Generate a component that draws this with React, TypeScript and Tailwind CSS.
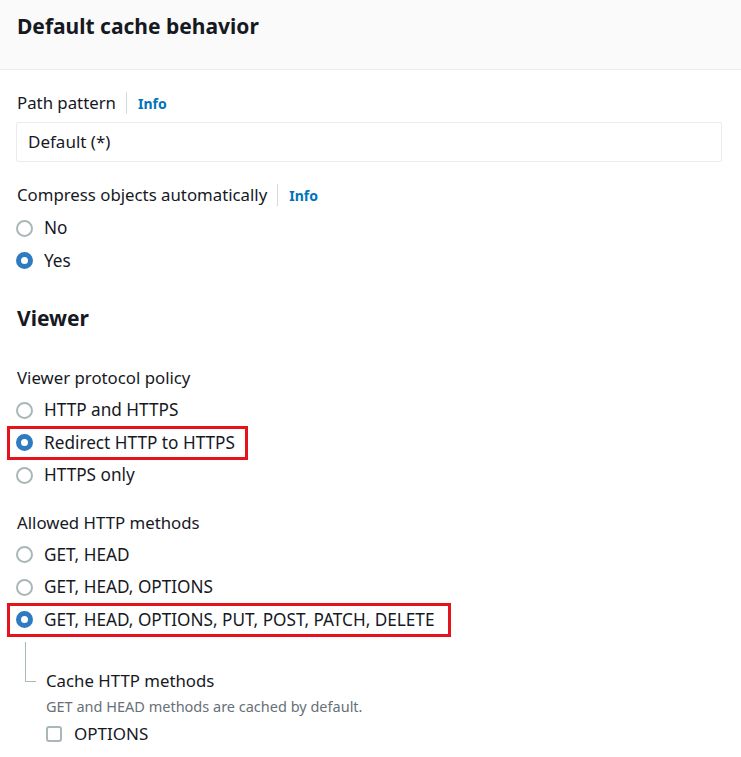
import React from "react"

const font = { fontFamily: '"Noto Sans", "Open Sans", Arial, sans-serif' }

function InfoLabel({ label }: { label: string }) {
  return (
    <div className="flex items-center h-[22px]">
      <span className="text-[16.8px] text-[#16191f]">{label}</span>
      <span className="ml-[10px] mr-[11px] h-[22px] w-px bg-[#d5dbdb]" />
      <span className="text-[14px] font-bold text-[#0073bb]">Info</span>
    </div>
  )
}

function Radio({
  label,
  checked,
  highlight,
  extra = "-right-[13px]",
}: {
  label: string
  checked?: boolean
  highlight?: boolean
  extra?: string
}) {
  return (
    <div className="relative flex h-[32.5px] items-center">
      <span
        className={
          checked
            ? "h-[17px] w-[17px] shrink-0 rounded-full border-[5px] border-[#2f7bc1] bg-white"
            : "h-[17px] w-[17px] shrink-0 rounded-full border-2 border-[#aab7b8] bg-white"
        }
      />
      <span className="ml-[11px] text-[17.2px] text-[#16191f]">{label}</span>
      {highlight && (
        <span
          className={`pointer-events-none absolute -left-[9px] -top-[1px] -bottom-[1px] border-[3px] border-[#e5141c] ${extra}`}
        />
      )}
    </div>
  )
}

export default function App() {
  return (
    <div className="min-h-[757px] w-[741px] bg-white" style={font}>
      <div className="h-[70px] border-b border-[#eaeded] bg-[#fafafa] px-[17px] pt-[12px]">
        <h2 className="text-[21px] font-bold leading-[28px] text-[#16191f]">Default cache behavior</h2>
      </div>

      <div className="px-[16px] pt-[22px]">
        <div className="pl-[1px]">
          <InfoLabel label="Path pattern" />
        </div>
        <div className="mt-[8px] mr-[3px] flex h-[40px] items-center rounded-[2px] border border-[#eaeded] px-[11px] text-[17px] text-[#16191f]">
          Default (*)
        </div>

        <div className="mt-[22px] pl-[1px]">
          <InfoLabel label="Compress objects automatically" />
        </div>
        <div className="mt-[6px] flex flex-col">
          <Radio label="No" />
          <Radio label="Yes" checked />
        </div>

        <h3 className="mt-[27px] pl-[1px] text-[21px] font-bold leading-[28px] text-[#16191f]">Viewer</h3>

        <div className="mt-[35px] pl-[1px] text-[16.8px] leading-[22px] text-[#16191f]">Viewer protocol policy</div>
        <div className="mt-[5px] flex flex-col items-start">
          <Radio label="HTTP and HTTPS" />
          <Radio label="Redirect HTTP to HTTPS" checked highlight extra="-right-[13px]" />
          <Radio label="HTTPS only" />
        </div>

        <div className="mt-[20px] pl-[1px] text-[16.8px] leading-[22px] text-[#16191f]">Allowed HTTP methods</div>
        <div className="mt-[5px] flex flex-col items-start">
          <Radio label="GET, HEAD" />
          <Radio label="GET, HEAD, OPTIONS" />
          <Radio label="GET, HEAD, OPTIONS, PUT, POST, PATCH, DELETE" checked highlight extra="-right-[17px]" />
        </div>

        <div className="flex">
          <div className="ml-[9px] mt-[6px] h-[40px] w-[11px] border-b border-l border-[#aab7b8]" />
          <div className="ml-[10px] mt-[34px]">
            <div className="text-[16.8px] leading-[22px] text-[#16191f]">Cache HTTP methods</div>
            <div className="mt-[4px] text-[14.5px] leading-[20px] text-[#687078]">GET and HEAD methods are cached by default.</div>
            <div className="mt-[5px] flex items-center h-[26px]">
              <span className="h-[16px] w-[16px] rounded-[3px] border-2 border-[#aab7b8] bg-white" />
              <span className="ml-[12px] text-[17px] text-[#16191f]">OPTIONS</span>
            </div>
          </div>
        </div>
      </div>
    </div>
  )
}
